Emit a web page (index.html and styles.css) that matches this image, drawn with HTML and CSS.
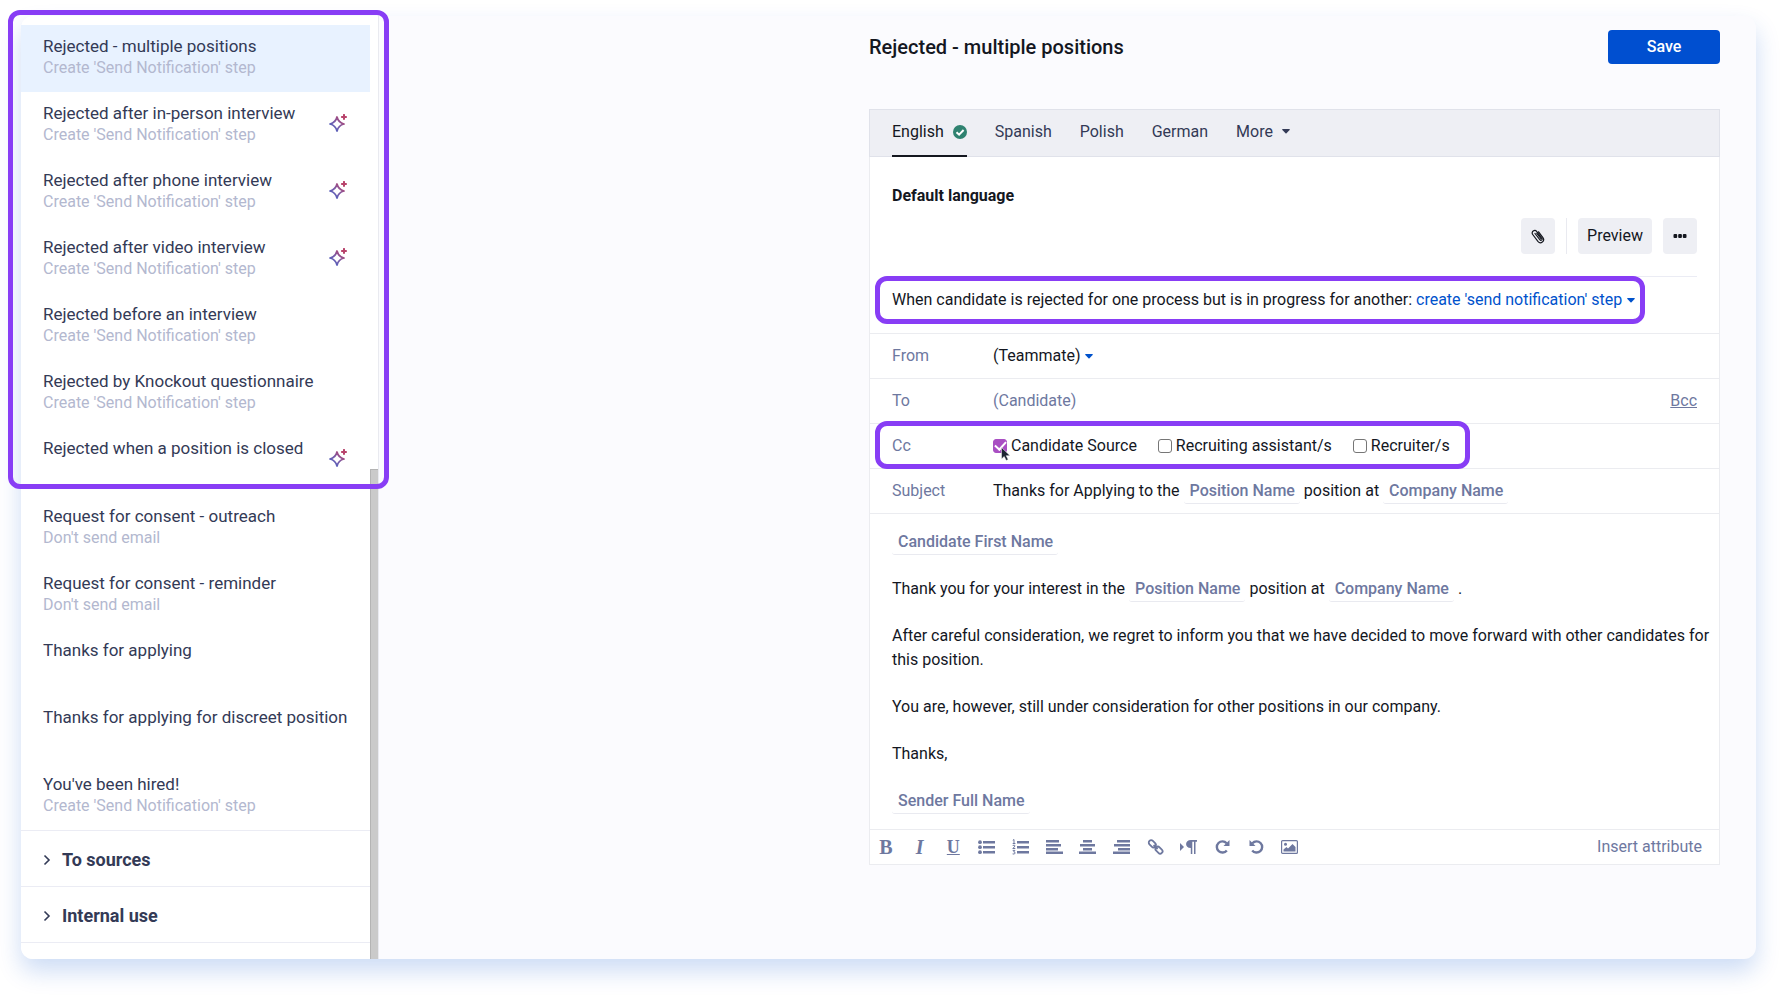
FILE: index.html
```html
<!DOCTYPE html>
<html lang="en">
  <head>
    <meta charset="UTF-8" />
    <meta name="viewport" content="width=device-width, initial-scale=1.0" />
    <title>Email templates</title>
    <link rel="stylesheet" href="styles.css">
  </head>
  <body>
    <!-- shared icons -->
    <svg class="defs" width="0" height="0" aria-hidden="true">
      <defs>
        <linearGradient id="sparkleFill" x1="0" y1="1" x2="1" y2="0">
          <stop offset="0" stop-color="#3f63c9" />
          <stop offset="0.5" stop-color="#7a5aa6" />
          <stop offset="1" stop-color="#c23f62" />
        </linearGradient>
        <symbol id="sparkle" viewBox="0 0 18 18">
          <path d="M8 3 Q9.400 8.600 15 10 Q9.400 11.400 8 17 Q6.600 11.400 1 10 Q6.600 8.600 8 3Z" fill="none" stroke="url(#sparkleFill)" stroke-width="1.800" stroke-linejoin="round" />
          <path d="M15 .9v4.200M12.900 3h4.200" fill="none" stroke="#b8436b" stroke-width="2" stroke-linecap="round" />
        </symbol>
        <symbol id="caret" viewBox="0 0 8 5">
          <path d="M.7 0h6.6q.9.2.3 1L4.5 4.2q-.5.5-1 0L.4 1Q-.2.2.7 0z" fill="currentColor" />
        </symbol>
        <symbol id="chevron" viewBox="0 0 8 12">
          <path d="M1.5 1.5 6 6l-4.500 4.500" fill="none" stroke="currentColor" stroke-width="1.6" />
        </symbol>
      </defs>
    </svg>

    <div class="app">
      <aside class="sidebar">
        <nav class="template-nav">
          <div class="template-group marked marked-list">
            <button class="template active" type="button">
              <span class="template-text">
                <span class="template-name">Rejected - multiple positions</span>
                <span class="template-step">Create 'Send Notification' step</span>
              </span>
            </button>
            <button class="template" type="button">
              <span class="template-text">
                <span class="template-name">Rejected after in-person interview</span>
                <span class="template-step">Create 'Send Notification' step</span>
              </span>
              <svg class="sparkle"><use href="#sparkle" /></svg>
            </button>
            <button class="template" type="button">
              <span class="template-text">
                <span class="template-name">Rejected after phone interview</span>
                <span class="template-step">Create 'Send Notification' step</span>
              </span>
              <svg class="sparkle"><use href="#sparkle" /></svg>
            </button>
            <button class="template" type="button">
              <span class="template-text">
                <span class="template-name">Rejected after video interview</span>
                <span class="template-step">Create 'Send Notification' step</span>
              </span>
              <svg class="sparkle"><use href="#sparkle" /></svg>
            </button>
            <button class="template" type="button">
              <span class="template-text">
                <span class="template-name">Rejected before an interview</span>
                <span class="template-step">Create 'Send Notification' step</span>
              </span>
            </button>
            <button class="template" type="button">
              <span class="template-text">
                <span class="template-name">Rejected by Knockout questionnaire</span>
                <span class="template-step">Create 'Send Notification' step</span>
              </span>
            </button>
            <button class="template" type="button">
              <span class="template-text">
                <span class="template-name">Rejected when a position is closed</span>
              </span>
              <svg class="sparkle"><use href="#sparkle" /></svg>
            </button>
          </div>
          <div class="template-group template-group-rest">
            <button class="template" type="button">
              <span class="template-text">
                <span class="template-name">Request for consent - outreach</span>
                <span class="template-step">Don't send email</span>
              </span>
            </button>
            <button class="template" type="button">
              <span class="template-text">
                <span class="template-name">Request for consent - reminder</span>
                <span class="template-step">Don't send email</span>
              </span>
            </button>
            <button class="template" type="button">
              <span class="template-text">
                <span class="template-name">Thanks for applying</span>
              </span>
            </button>
            <button class="template" type="button">
              <span class="template-text">
                <span class="template-name">Thanks for applying for discreet position</span>
              </span>
            </button>
            <button class="template" type="button">
              <span class="template-text">
                <span class="template-name">You've been hired!</span>
                <span class="template-step">Create 'Send Notification' step</span>
              </span>
            </button>
          </div>
          <button class="section" type="button" aria-expanded="false">
            <svg class="chevron"><use href="#chevron" /></svg>
            To sources
          </button>
          <button class="section section-last" type="button" aria-expanded="false">
            <svg class="chevron"><use href="#chevron" /></svg>
            Internal use
          </button>
        </nav>
        <div class="scrollbar"><div class="scrollbar-thumb"></div></div>
      </aside>

      <main class="content">
        <div class="panel">
          <header class="panel-header">
            <h1>Rejected - multiple positions</h1>
            <button class="save" type="button">Save</button>
          </header>

          <section class="editor">
            <div class="tabs">
              <button class="tab active" type="button">
                English
                <svg class="tab-check" viewBox="0 0 14 14">
                  <circle cx="7" cy="7" r="7" fill="#2f8270" />
                  <path d="M3.500 7.200 6.100 9.700 10.600 5" fill="none" stroke="#fff" stroke-width="2" />
                </svg>
              </button>
              <button class="tab" type="button">Spanish</button>
              <button class="tab" type="button">Polish</button>
              <button class="tab" type="button">German</button>
              <button class="tab" type="button" aria-haspopup="menu">
                More
                <svg class="caret"><use href="#caret" /></svg>
              </button>
            </div>

            <div class="editor-top">
              <h2>Default language</h2>
              <div class="actions">
                <button class="action" type="button" aria-label="Attach file">
                  <svg width="14" height="16" viewBox="0 0 14 16" fill="none" stroke="#14171f" stroke-width="1.200" stroke-linecap="round">
                    <path d="M4 5.500 8.800 11.700c1.200 1.500 3 .1 1.900-1.400L5.800 3.600C3.700.9-.3 3.800 1.700 6.500l5.200 6.800c2.700 3.300 7.500-.1 5-3.700L7.600 3.800" />
                    <path d="M5.800 5.300l4 5.200" />
                  </svg>
                </button>
                <span class="divider"></span>
                <button class="action preview" type="button">Preview</button>
                <button class="action" type="button" aria-label="More actions">
                  <svg width="14" height="4" viewBox="0 0 14 4" fill="#14171f">
                    <rect x=".5" width="3.700" height="4" rx="1" />
                    <rect x="5.200" width="3.700" height="4" rx="1" />
                    <rect x="9.800" width="3.700" height="4" rx="1" />
                  </svg>
                </button>
              </div>
            </div>

            <div class="trigger">
              <div class="marked marked-trigger">
                <label for="trigger">When candidate is rejected for one process but is in progress for another:</label>
                <span class="picker picker-link">
                  <select id="trigger">
                    <option>create 'send notification' step</option>
                  </select>
                  <svg class="caret"><use href="#caret" /></svg>
                </span>
              </div>
            </div>

            <div class="row">
              <label class="row-label" for="from">From</label>
              <span class="picker">
                <select id="from">
                  <option>(Teammate)</option>
                </select>
                <svg class="caret"><use href="#caret" /></svg>
              </span>
            </div>
            <div class="row">
              <span class="row-label">To</span>
              <span class="muted">(Candidate)</span>
              <a class="bcc" href="#bcc">Bcc</a>
            </div>
            <div class="row">
              <div class="cc marked marked-cc">
                <span class="row-label">Cc</span>
                <label class="check">
                  <input type="checkbox" checked />
                  Candidate Source
                  <svg class="pointer" viewBox="0 0 10 14">
                    <path d="M.5.500v11.500l2.700-2.500 2 4 2-1-2-3.800h3.900z" fill="#1e2433" stroke="#fff" stroke-width=".5" />
                  </svg>
                </label>
                <label class="check"><input type="checkbox" /> Recruiting assistant/s</label>
                <label class="check"><input type="checkbox" /> Recruiter/s</label>
              </div>
            </div>
            <div class="row">
              <span class="row-label" id="subjectLabel">Subject</span>
              <div contenteditable="true" role="textbox" aria-labelledby="subjectLabel" spellcheck="false">Thanks for Applying to the <span class="attr">Position Name</span> position at <span class="attr">Company Name</span></div>
            </div>

            <div class="message" contenteditable="true" role="textbox" aria-label="Message" spellcheck="false">
              <p><span class="attr">Candidate First Name</span></p>
              <p>Thank you for your interest in the <span class="attr">Position Name</span> position at <span class="attr">Company Name</span> .</p>
              <p>After careful consideration, we regret to inform you that we have decided to move forward with other candidates for this position.</p>
              <p>You are, however, still under consideration for other positions in our company.</p>
              <p>Thanks,</p>
              <p><span class="attr">Sender Full Name</span></p>
            </div>

            <div class="toolbar">
              <div class="tools">
                <button class="tool tool-bold" type="button" aria-label="Bold">B</button>
                <button class="tool tool-italic" type="button" aria-label="Italic">I</button>
                <button class="tool tool-underline" type="button" aria-label="Underline">U</button>
                <button class="tool" type="button" aria-label="Bulleted list">
                  <svg viewBox="0 0 17 16"><path d="M5 2h12v2.500H5zM5 7h12v2.500H5zM5 12h12v2.500H5z" /><circle cx="2" cy="3.200" r="1.900" /><circle cx="2" cy="8.200" r="1.900" /><circle cx="2" cy="13.200" r="1.900" /></svg>
                </button>
                <button class="tool" type="button" aria-label="Numbered list">
                  <svg viewBox="0 0 17 16"><path d="M5 2h12v2.500H5zM5 7h12v2.500H5zM5 12h12v2.500H5z" /><path d="M.8 1.300 2 .5v4M.7 4.500h2.700M.7 6.500q2.300-1 2.200.4Q2.800 7.700.8 9.500h2.500M.7 11.400h2.200l-1.200 1.500q1.500 0 1.400 1.200-.3 1.500-2.500.8" fill="none" stroke="currentColor" /></svg>
                </button>
                <button class="tool" type="button" aria-label="Align left">
                  <svg viewBox="0 0 17 16"><path d="M0 1h13v2.500H0zM0 5h15v2.500H0zM0 9h12v2.500H0zM0 12.500h17V15H0z" /></svg>
                </button>
                <button class="tool" type="button" aria-label="Align center">
                  <svg viewBox="0 0 17 16"><path d="M4 1h9v2.500H4zM1 5h15v2.500H1zM4 9h9v2.500H4zM0 12.500h17V15H0z" /></svg>
                </button>
                <button class="tool" type="button" aria-label="Align right">
                  <svg viewBox="0 0 17 16"><path d="M4 1h13v2.500H4zM1 5h16v2.500H1zM5 9h12v2.500H5zM0 12.500h17V15H0z" /></svg>
                </button>
                <button class="tool" type="button" aria-label="Insert link">
                  <svg viewBox="0 0 17 16" fill="none" stroke="currentColor" stroke-width="1.800"><rect x="1.300" y="2.400" width="8" height="4.800" rx="2.400" transform="rotate(45 5.300 4.800)" /><rect x="8" y="8.700" width="8" height="4.800" rx="2.400" transform="rotate(45 12 11.100)" /><path d="M6.600 6l4 4" /></svg>
                </button>
                <button class="tool" type="button" aria-label="Text direction">
                  <svg viewBox="0 0 17 16"><path d="M0 4v8l4-4zM17 1v1.700h-1.500V15H14V2.700h-1.700V15h-1.500V9C4.500 9 4.500 1 11 1z" /></svg>
                </button>
                <button class="tool" type="button" aria-label="Redo">
                  <svg viewBox="0 0 17 16"><path d="M12.800 11.500A5.600 5.600 0 1 1 12.600 4.200" fill="none" stroke="currentColor" stroke-width="2.400" /><path d="M15.500 1v6h-6z" /></svg>
                </button>
                <button class="tool" type="button" aria-label="Undo">
                  <svg viewBox="0 0 17 16"><path d="M4.200 11.500A5.600 5.600 0 1 0 4.400 4.200" fill="none" stroke="currentColor" stroke-width="2.400" /><path d="M1.500 1v6h6z" /></svg>
                </button>
                <button class="tool" type="button" aria-label="Insert image">
                  <svg viewBox="0 0 17 16"><rect x=".6" y="1.600" width="15.800" height="12.800" rx="1" fill="none" stroke="currentColor" stroke-width="1.200" /><circle cx="4.500" cy="5.200" r="1.500" /><path d="M2.500 12.500v-2L5.500 8 7 9.500 11.500 5l3 3v4.500z" /></svg>
                </button>
              </div>
              <button class="insert" type="button">Insert attribute</button>
            </div>
          </section>
        </div>
      </main>
    </div>
  </body>
</html>
```

FILE: styles.css
```css
* {
  margin: 0;
  padding: 0;
  box-sizing: border-box;
}

body {
  display: flex;
  min-height: 100vh;
  padding: 16px 33px 41px 21px;
  font-family: Roboto, Arial, sans-serif;
  font-size: 16px;
  line-height: 24px;
  color: #14171f;
  background-color: #fff;
}

button,
select {
  font: inherit;
  color: inherit;
  background: none;
  border: none;
  cursor: pointer;
}

svg {
  flex: none;
}

.defs {
  position: absolute;
}

.app {
  flex: 1;
  display: flex;
  background-color: #fbfbfe;
  border-radius: 12px;
  box-shadow: 0 12px 24px rgba(0, 80, 205, 0.2);
}

/* purple callout frame */
.marked {
  position: relative;
}

.marked::after {
  content: "";
  position: absolute;
  border: 5px solid #883df5;
  border-radius: 12px;
  pointer-events: none;
}

.marked-list::after {
  inset: -15px -19px 5px -13px;
}

.marked-trigger::after {
  inset: -12px -10px -12px -17px;
}

.marked-cc::after {
  inset: -3px -20px -1px -17px;
}

/* sidebar */
.sidebar {
  flex: none;
  display: flex;
  width: 358px;
  background-color: #fff;
  border-right: 1px solid #e9eaf0;
  border-radius: 12px 0 0 12px;
}

.template-nav {
  flex: 1;
  padding: 9px 0 14px;
}

.template-group-rest {
  padding-top: 1px;
}

.template {
  display: flex;
  align-items: center;
  justify-content: space-between;
  width: 100%;
  height: 67px;
  padding: 0 23px 6px 22px;
  text-align: left;
  color: #333a56;
}

.template.active {
  background-color: #e8f2ff;
}

.template-text {
  align-self: flex-start;
  padding-top: 10px;
  white-space: nowrap;
}

.template-name,
.template-step {
  display: block;
  line-height: 22px;
}

.template-name {
  font-size: 17px;
}

.template-step {
  color: #b3b8cf;
}

.sparkle {
  width: 18px;
  height: 18px;
}

.section {
  display: flex;
  align-items: center;
  gap: 11px;
  width: 100%;
  height: 56px;
  padding: 2px 22px 0;
  border-top: 1px solid #ebecf4;
  font-size: 18px;
  font-weight: 700;
  color: #333a56;
}

.section-last {
  height: 57px;
  border-bottom: 1px solid #ebecf4;
}

.chevron {
  width: 8px;
  height: 12px;
}

.scrollbar {
  display: flex;
  flex-direction: column;
  justify-content: flex-end;
  width: 8px;
}

.scrollbar-thumb {
  height: 52%;
  background-color: #cacaca;
  border-top: 1px solid #b4b4b4;
  border-left: 1px solid #b4b4b4;
}

/* content */
.content {
  flex: 1;
  display: grid;
  grid-template-columns: 490fr 851fr;
  padding: 14px 36px 14px 0;
}

.panel {
  grid-column: 2;
}

.panel-header {
  display: flex;
  align-items: center;
  justify-content: space-between;
  height: 34px;
  margin-bottom: 45px;
}

h1 {
  font-size: 20px;
  font-weight: 500;
}

.save {
  width: 112px;
  height: 34px;
  font-weight: 500;
  color: #fff;
  background-color: #004fd0;
  border-radius: 4px;
}

.editor {
  background-color: #fff;
  border: 1px solid #ebecf0;
}

.tabs {
  display: flex;
  gap: 28px;
  height: 48px;
  margin: -1px -1px 0;
  padding: 0 22px;
  background-color: #eeeff4;
  border: 1px solid #e0e2ea;
}

.tab {
  display: flex;
  align-items: center;
  gap: 9px;
  height: 47px;
  padding-bottom: 2px;
  border-bottom: 2px solid transparent;
  color: #333a56;
}

.tab.active {
  color: #14171f;
  border-color: #14171f;
}

.tab-check {
  width: 14px;
  height: 14px;
}

.caret {
  width: 8px;
  height: 5px;
}

.editor-top {
  margin: 0 22px;
  padding: 27px 0 22px;
  border-bottom: 1px solid #ebecf4;
}

h2 {
  font-size: 16px;
  font-weight: 700;
}

.actions {
  display: flex;
  justify-content: flex-end;
  gap: 11px;
  margin-top: 10px;
}

.action {
  display: flex;
  align-items: center;
  justify-content: center;
  width: 34px;
  height: 36px;
  background-color: #eeeff4;
  border-radius: 4px;
}

.preview {
  width: 74px;
}

.divider {
  width: 1px;
  background-color: #e9eaf0;
}

.trigger {
  display: flex;
  padding: 11px 22px 21px;
}

.marked-trigger {
  display: flex;
  gap: 4px;
}

.picker {
  display: flex;
  align-items: center;
  gap: 4px;
}

.picker select {
  appearance: none;
}

.picker .caret {
  color: #0052cc;
}

.picker-link {
  color: #0052cc;
}

.row {
  display: flex;
  align-items: center;
  height: 45px;
  padding: 0 22px;
  border-top: 1px solid #ebecf0;
}

.row-label {
  width: 101px;
  color: #6e789f;
}

.muted {
  color: #6e789f;
}

.bcc {
  margin-left: auto;
  color: #6e789f;
}

.cc {
  display: flex;
  align-items: center;
  height: 44px;
}

.check {
  position: relative;
  display: flex;
  align-items: center;
  gap: 4px;
  margin-right: 21px;
}

.check:last-child {
  margin-right: 0;
}

.check input {
  appearance: none;
  display: grid;
  place-items: center;
  width: 14px;
  height: 14px;
  background-color: #fff;
  border: 1px solid #767676;
  border-radius: 3px;
}

.check input:checked {
  background-color: #a94fc3;
  border-color: #a94fc3;
}

.check input:checked::before {
  content: "";
  width: 9px;
  height: 5px;
  margin-bottom: 3px;
  border: solid #fff;
  border-width: 0 0 2px 2px;
  transform: rotate(-48deg);
}

.pointer {
  position: absolute;
  left: 8px;
  top: 13px;
  width: 10px;
  height: 14px;
}

.attr {
  padding: 0 5px 3px 6px;
  font-weight: 500;
  color: #6e789f;
  border-bottom: 1px solid #e9eaf0;
  border-radius: 3px;
}

.message {
  padding: 16px 8px 16px 22px;
  border-top: 1px solid #ebecf0;
}

.message p + p {
  margin-top: 23px;
}

.toolbar {
  display: flex;
  align-items: center;
  justify-content: space-between;
  height: 35px;
  padding-right: 17px;
  border-top: 1px solid #ebecf0;
  color: #6e789f;
}

.tools {
  display: flex;
  justify-content: space-between;
  width: 436px;
}

.tool {
  display: flex;
  align-items: center;
  justify-content: center;
  width: 32px;
  height: 24px;
}

.tool svg {
  width: 17px;
  height: 16px;
}

.tool svg:not([fill]) {
  fill: currentColor;
}

.tool-bold,
.tool-italic,
.tool-underline {
  font-family: "Liberation Serif", serif;
  font-size: 20px;
  font-weight: 700;
}

.tool-italic {
  font-style: italic;
}

.tool-underline {
  font-size: 18px;
  text-decoration: underline;
}
```
